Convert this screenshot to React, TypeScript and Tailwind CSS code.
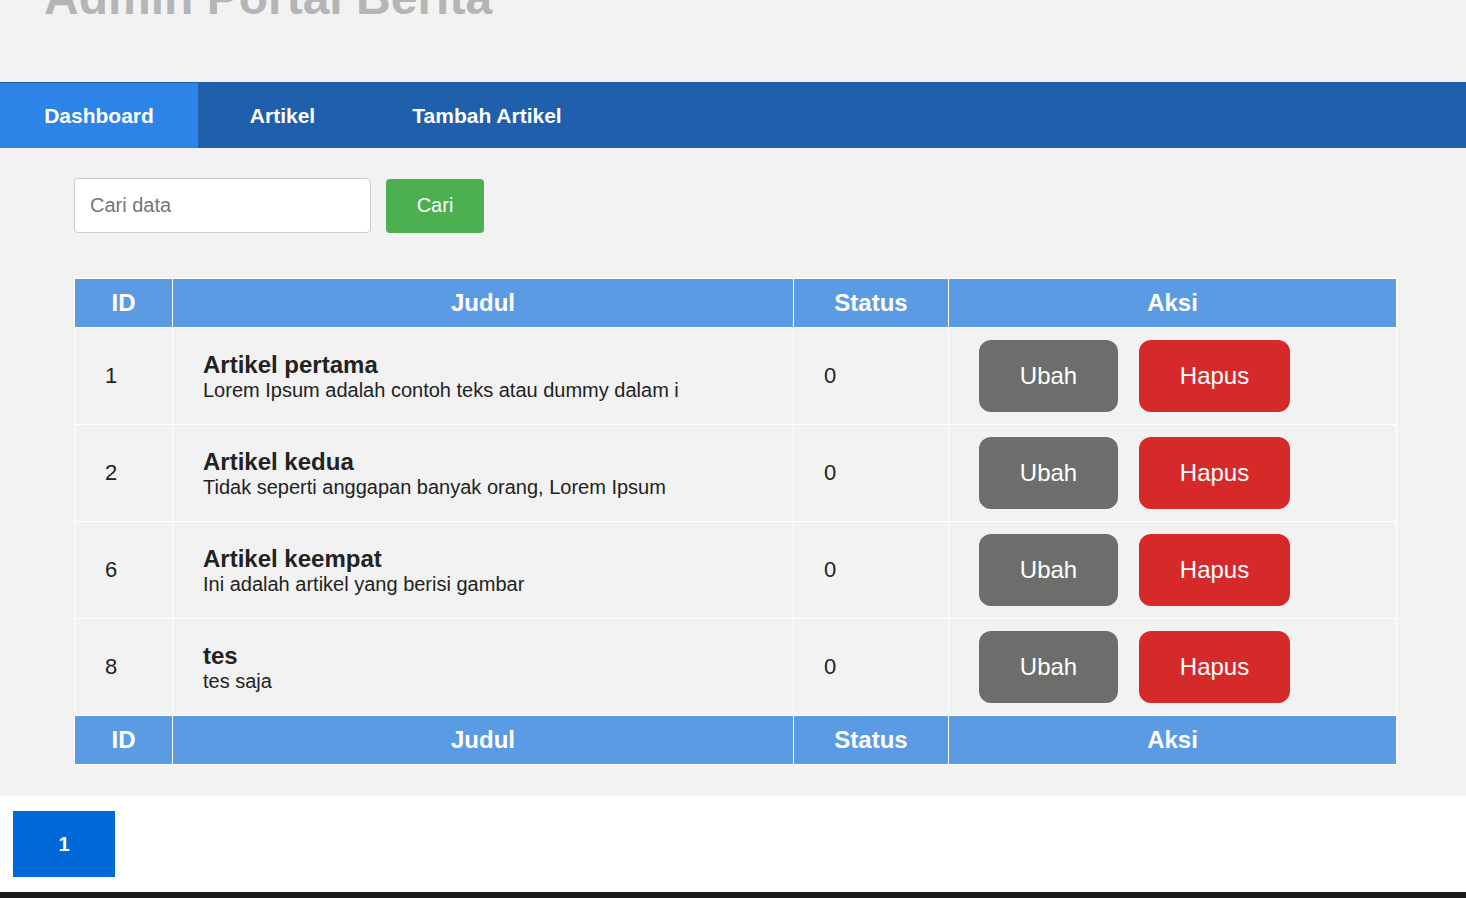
const articles = [
  { id: 1, title: "Artikel pertama", desc: "Lorem Ipsum adalah contoh teks atau dummy dalam i", status: 0 },
  { id: 2, title: "Artikel kedua", desc: "Tidak seperti anggapan banyak orang, Lorem Ipsum", status: 0 },
  { id: 6, title: "Artikel keempat", desc: "Ini adalah artikel yang berisi gambar", status: 0 },
  { id: 8, title: "tes", desc: "tes saja", status: 0 },
];

function HeadRow() {
  return (
    <tr className="bg-[#5b9be3] text-white text-[24px] font-bold">
      <th className="h-[49px] border border-white text-center">ID</th>
      <th className="h-[49px] border border-white text-center">Judul</th>
      <th className="h-[49px] border border-white text-center">Status</th>
      <th className="h-[49px] border border-white text-center">Aksi</th>
    </tr>
  );
}

export default function App() {
  return (
    <div className="min-h-screen bg-white font-['Liberation_Sans',Arial,sans-serif] leading-[normal] text-[#222]">
      {/* Title */}
      <div className="h-[82px] overflow-hidden bg-[#f2f2f2]">
        <h1 className="-mt-[26px] pl-[44px] text-[48px] leading-none font-bold text-[#b5b5b5]">
          Admin Portal Berita
        </h1>
      </div>

      {/* Navigation */}
      <nav className="flex h-[66px] bg-[#205fab] pt-px text-[21px] font-bold text-white">
        <a className="flex w-[198px] items-center justify-center bg-[#2c83e8]">Dashboard</a>
        <a className="flex w-[169px] items-center justify-center">Artikel</a>
        <a className="flex w-[240px] items-center justify-center">Tambah Artikel</a>
      </nav>

      {/* Content */}
      <main className="bg-[#f2f2f2] pl-[74px] pt-[30px] pb-[31px]">
        <form className="flex items-center gap-[15px]">
          <input
            type="text"
            placeholder="Cari data"
            className="h-[55px] w-[297px] rounded-[4px] border border-[#ccc] bg-white px-[15px] text-[20px] placeholder:text-[#757575] outline-none"
          />
          <button type="button" className="h-[54px] w-[98px] rounded-[4px] bg-[#4caf50] text-[20px] text-white">
            Cari
          </button>
        </form>

        <table className="mt-[45px] w-[1323px] table-fixed border-collapse">
          <colgroup>
            <col className="w-[98px]" />
            <col className="w-[621px]" />
            <col className="w-[155px]" />
            <col />
          </colgroup>
          <thead>
            <HeadRow />
          </thead>
          <tbody>
            {articles.map((a) => (
              <tr key={a.id}>
                <td className="border border-white pl-[30px] text-[22px]">{a.id}</td>
                <td className="border border-white pl-[30px]">
                  <div className="text-[24px] font-bold">{a.title}</div>
                  <div className="text-[20px]">{a.desc}</div>
                </td>
                <td className="border border-white pl-[30px] text-[22px]">{a.status}</td>
                <td className="border border-white py-[12px] pl-[30px]">
                  <div className="flex gap-[21px]">
                    <button className="h-[72px] w-[139px] rounded-[12px] bg-[#6d6e6b] text-[24px] text-white">Ubah</button>
                    <button className="h-[72px] w-[151px] rounded-[12px] bg-[#d62a2a] text-[24px] text-white">Hapus</button>
                  </div>
                </td>
              </tr>
            ))}
          </tbody>
          <tfoot>
            <HeadRow />
          </tfoot>
        </table>
      </main>

      {/* Pagination */}
      <div className="px-[13px] py-[15px]">
        <a className="flex h-[66px] w-[102px] items-center justify-center bg-[#0069d9] text-[20px] font-bold text-white">1</a>
      </div>

      <footer className="h-[60px] bg-[#1b1b1b]" />
    </div>
  );
}
